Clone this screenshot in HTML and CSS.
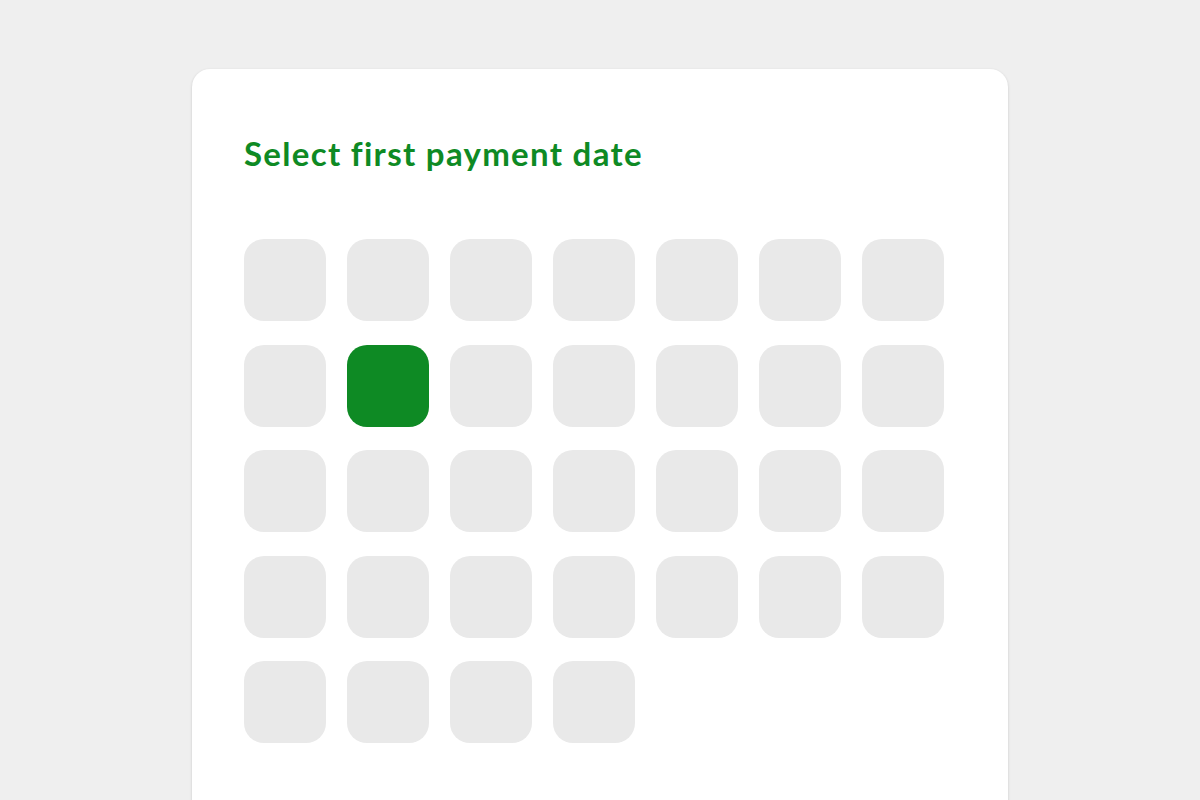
FILE: index.html
```html
<!DOCTYPE html>
<html lang="en">

<head>
    <meta charset="UTF-8">
    <meta name="viewport" content="width=device-width, initial-scale=1.0">
    <title>Select first payment date</title>
    <link rel="stylesheet" href="styles.css">
</head>

<body>
    <div class="card">
        <h1 class="title">Select first payment date</h1>
        <div class="days">
            <div class="day"></div>
            <div class="day"></div>
            <div class="day"></div>
            <div class="day"></div>
            <div class="day"></div>
            <div class="day"></div>
            <div class="day"></div>
            <div class="day"></div>
            <div class="day selected"></div>
            <div class="day"></div>
            <div class="day"></div>
            <div class="day"></div>
            <div class="day"></div>
            <div class="day"></div>
            <div class="day"></div>
            <div class="day"></div>
            <div class="day"></div>
            <div class="day"></div>
            <div class="day"></div>
            <div class="day"></div>
            <div class="day"></div>
            <div class="day"></div>
            <div class="day"></div>
            <div class="day"></div>
            <div class="day"></div>
            <div class="day"></div>
            <div class="day"></div>
            <div class="day"></div>
            <div class="day"></div>
            <div class="day"></div>
            <div class="day"></div>
            <div class="day"></div>
        </div>
    </div>
</body>

</html>
```

FILE: styles.css
```css
body {
    font-family: 'Lato', sans-serif;
    margin: 0;
    background-color: #efefef;
    overflow: hidden;
}

.card {
    width: 816px;
    min-height: 800px;
    margin: 69px auto 0;
    padding: 52px;
    box-sizing: border-box;
    background-color: #ffffff;
    border-radius: 18px;
    box-shadow: 0 1px 3px rgba(0, 0, 0, 0.16);
}

.title {
    margin: 12px 0 0;
    color: #0e8a24;
    font-size: 33px;
    font-weight: 700;
    line-height: 40px;
    letter-spacing: 1.3px;
}

.days {
    display: grid;
    grid-template-columns: repeat(7, 82px);
    grid-auto-rows: 82px;
    column-gap: 21px;
    row-gap: 23.5px;
    margin-top: 66px;
}

.day {
    background-color: #e9e9e9;
    border-radius: 20px;
}

.day.selected {
    background-color: #0e8a24;
}
```
